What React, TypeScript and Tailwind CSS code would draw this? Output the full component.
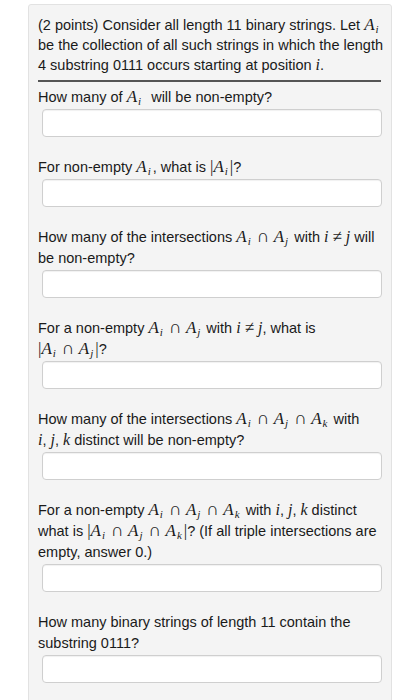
import React from 'react';

const serif = { fontFamily: '"Liberation Serif", "Times New Roman", serif' };

const V: React.FC<{ children: React.ReactNode }> = ({ children }) => (
  <span className="text-[16px] italic leading-[0]" style={serif}>
    {children}
  </span>
);

const A: React.FC<{ s: string }> = ({ s }) => (
  <span className="text-[17px] italic leading-[0]" style={serif}>
    A<span className="relative top-[3px] ml-[1px] mr-[2px] text-[11px] leading-[0]">{s}</span>
  </span>
);

const Cap = () => (
  <span className="mx-[4px] text-[18px] leading-[0]" style={serif}>
    ∩
  </span>
);
const Ne = () => (
  <span className="mx-[4px] text-[17px] leading-[0]" style={serif}>
    ≠
  </span>
);
const Bar = () => (
  <span className="text-[17px] leading-[0]" style={serif}>
    |
  </span>
);

const Answer = () => (
  <div className="mt-[1px] ml-1 mr-[9px] h-[28px] rounded-[4px] border border-[#cfcfcf] bg-white shadow-[inset_0_1px_1px_rgba(0,0,0,0.06)]" />
);

const Question: React.FC<{ children: React.ReactNode; first?: boolean }> = ({ children, first }) => (
  <div className={first ? 'mt-[5px]' : 'mt-[20px]'}>
    <p className="leading-[21px]">{children}</p>
    <Answer />
  </div>
);

export default function App() {
  return (
    <div className="min-h-[700px] bg-white pt-1 pl-[28px] pr-[28px]">
      <div
        className="min-h-[700px] rounded-t-[3px] border border-[#e2e2e2] bg-[#f4f4f4] pl-[9px] pt-[10px] text-[14.5px] text-[#1a1a1a]"
        style={{ fontFamily: '"Liberation Sans", Arial, sans-serif' }}
      >
        <p className="leading-[20px] pr-[6px]">
          (2 points) Consider all length 11 binary strings. Let <A s="i" /> be the collection of all such strings in
          which the length 4 substring 0111 occurs starting at position <V>i</V>.
        </p>
        <div className="mt-[5px] mr-[10px] h-[2px] bg-[#555]" />

        <Question first>
          How many of <A s="i" />&nbsp; will be non-empty?
        </Question>

        <Question>
          For non-empty <A s="i" />, what is <Bar />
          <A s="i" />
          <Bar />?
        </Question>

        <Question>
          How many of the intersections <A s="i" />
          <Cap />
          <A s="j" /> with <V>i</V>
          <Ne />
          <V>j</V> will be non-empty?
        </Question>

        <Question>
          For a non-empty <A s="i" />
          <Cap />
          <A s="j" /> with <V>i</V>
          <Ne />
          <V>j</V>, what is
          <br />
          <Bar />
          <A s="i" />
          <Cap />
          <A s="j" />
          <Bar />?
        </Question>

        <Question>
          How many of the intersections <A s="i" />
          <Cap />
          <A s="j" />
          <Cap />
          <A s="k" /> with
          <br />
          <V>i</V>, <V>j</V>, <V>k</V> distinct will be non-empty?
        </Question>

        <Question>
          For a non-empty <A s="i" />
          <Cap />
          <A s="j" />
          <Cap />
          <A s="k" /> with <V>i</V>, <V>j</V>, <V>k</V> distinct
          <br />
          what is <Bar />
          <A s="i" />
          <Cap />
          <A s="j" />
          <Cap />
          <A s="k" />
          <Bar />? (If all triple intersections are empty, answer 0.)
        </Question>

        <Question>How many binary strings of length 11 contain the substring 0111?</Question>
      </div>
    </div>
  );
}
